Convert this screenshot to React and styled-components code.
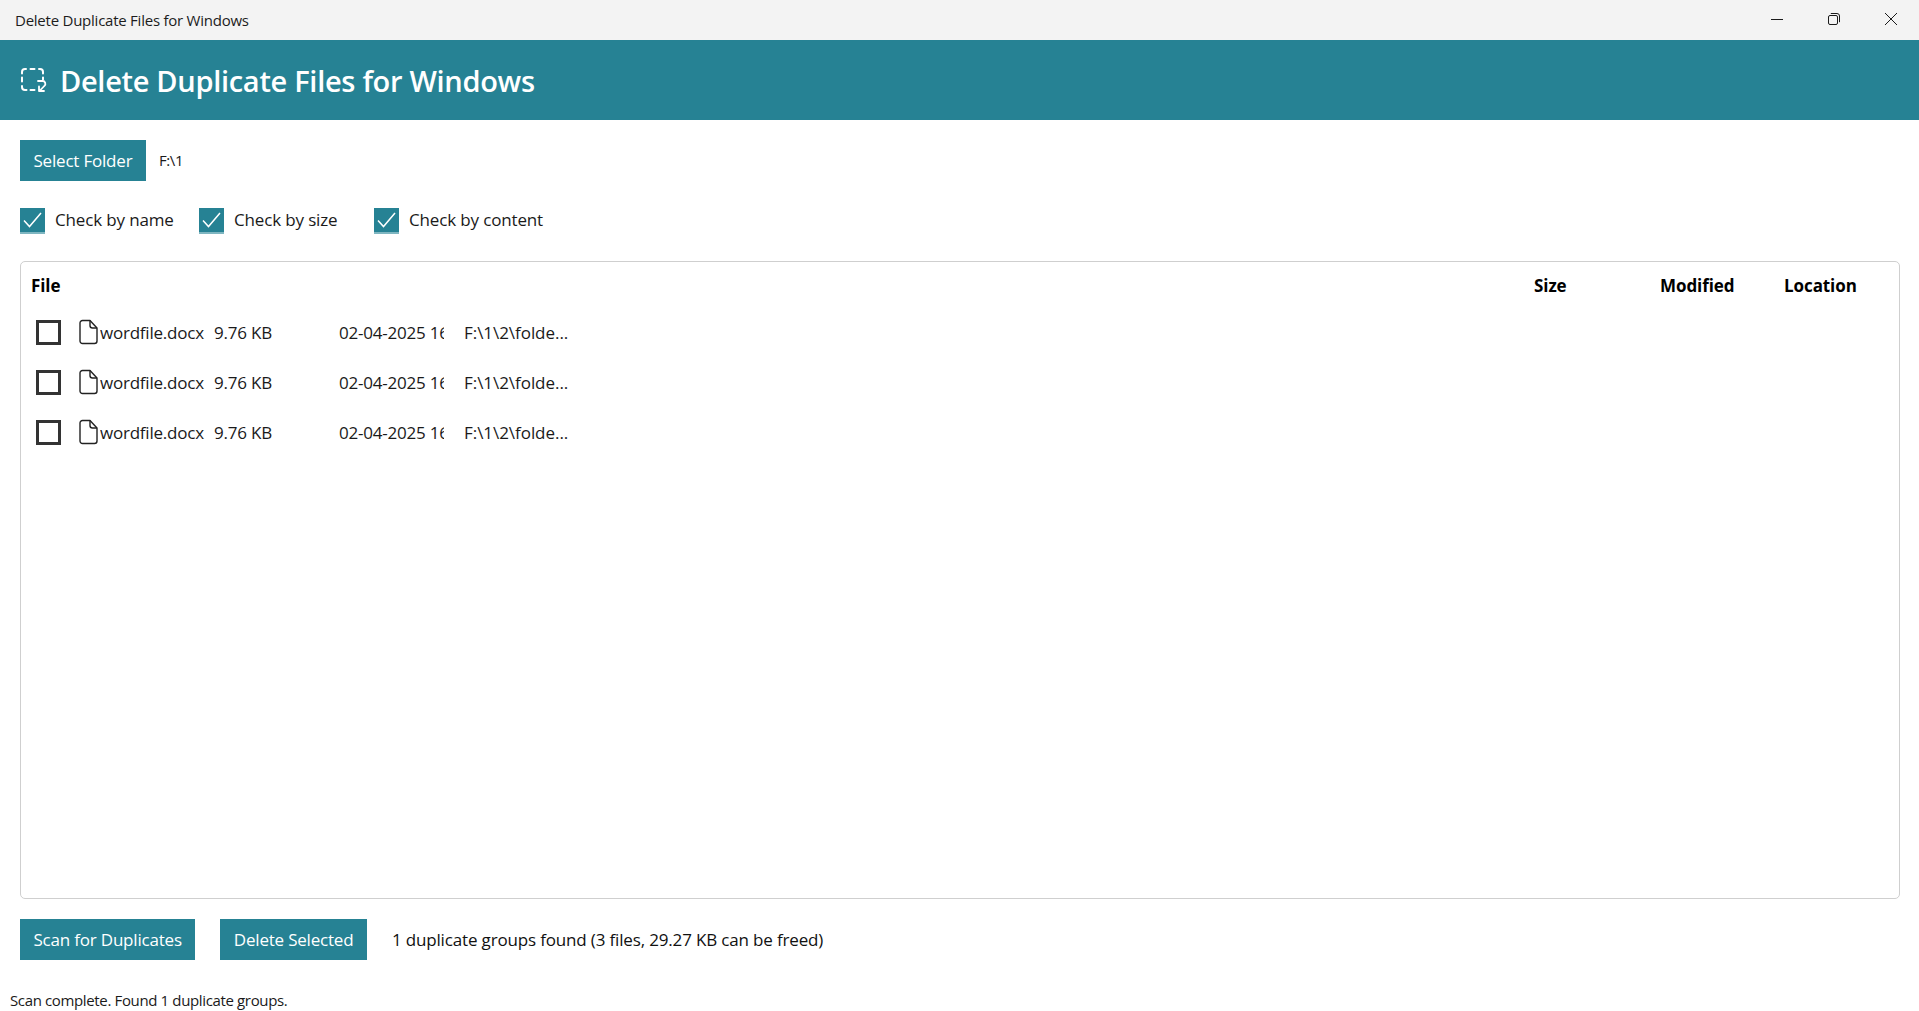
import React from "react";
import styled, { createGlobalStyle } from "styled-components";

const Global = createGlobalStyle`
  html, body { margin: 0; padding: 0; background: #fff; }
  body { font-family: "Open Sans", "Noto Sans", sans-serif; color: #1a1a1a; overflow: hidden; }
  * { box-sizing: border-box; }
`;
const TEAL = "#268294";

const Page = styled.div`
  width: 1919px; height: 1011px; display: flex; flex-direction: column; background: #fff;
`;
const TitleBar = styled.div`
  height: 40px; flex: none; background: #f3f3f3; display: flex; align-items: center;
  padding-left: 15px; font-size: 15px; letter-spacing: -0.24px; color: #1c1c1c;
`;
const TitleText = styled.span` flex: 1; `;
const WinButton = styled.div`
  width: 57px; height: 40px; display: flex; align-items: center; justify-content: center; padding-bottom: 2px;
`;
const Header = styled.header`
  height: 80px; flex: none; background: ${TEAL}; display: flex; align-items: center;
  padding-left: 20px; gap: 12px; color: #fff;
`;
const HeaderTitle = styled.h1`
  margin: 0; font-size: 29px; font-weight: 600; letter-spacing: -0.3px; color: #fff;
`;
const AppIconWrap = styled.span` display: flex; padding-top: 2px; `;
const Body = styled.main`
  flex: 1; min-height: 0; display: flex; flex-direction: column; padding: 20px 19px 0 20px;
`;
const FolderRow = styled.div` display: flex; align-items: center; height: 41px; gap: 13px; `;
const Button = styled.button`
  height: 41px; padding: 0 13.5px; border: 0; border-radius: 0; background: ${TEAL}; color: #fff;
  font: 400 17px "Open Sans", sans-serif; letter-spacing: -0.2px; white-space: nowrap;
`;
const PathText = styled.span` font-size: 15px; letter-spacing: -0.4px; padding-bottom: 1px; `;
const OptionsRow = styled.div` display: flex; height: 26px; margin-top: 27px; `;
const Option = styled.label`
  display: flex; align-items: center; width: ${p => p.$w}px; gap: 10px;
  font-size: 17px; letter-spacing: -0.15px; white-space: nowrap; line-height: 24px;
`;
const OptionText = styled.span` padding-bottom: 2px; `;
const CheckBox = styled.span`
  width: 25px; height: 26px; flex: none; background: ${TEAL}; border-bottom: 2px solid #7fb6c1;
  display: flex; align-items: center; justify-content: center;
`;
const Panel = styled.section`
  margin-top: 27px; height: 638px; flex: none; border: 1px solid #cfcfcf; border-radius: 5px;
  padding: 0 10px;
`;
const TableHead = styled.div`
  display: grid; grid-template-columns: 1503px 126px 124px 1fr; height: 45px; align-items: center;
  padding-top: 2px; font-size: 17px; font-weight: 700; letter-spacing: -0.08px; color: #000;
`;
const Row = styled.div`
  display: grid; grid-template-columns: 42px 22px 114px 125px 105px 1fr; height: 50px; align-items: center;
  padding-left: 5px; font-size: 17px; letter-spacing: -0.22px;
`;
const RowBox = styled.span`
  width: 25px; height: 25px; border: 3px solid #333; display: block; background: #fff;
`;
const Cell = styled.span` white-space: nowrap; overflow: hidden; `;
const Location = styled.span`
  display: block; padding-left: 20px; white-space: nowrap; letter-spacing: -0.05px;
`;
const ActionRow = styled.div` display: flex; align-items: center; gap: 25px; margin-top: 20px; height: 41px; `;
const Summary = styled.span` font-size: 17px; letter-spacing: -0.16px; color: #111; `;
const StatusBar = styled.footer`
  margin: 22px 0 0 -10px; font-size: 15px; letter-spacing: -0.36px; line-height: 36px; height: 36px;
`;

const Minimize = () => (
  <svg width="14" height="14" viewBox="0 0 14 14"><path d="M1 7.5h12" stroke="#1a1a1a" strokeWidth="1" /></svg>
);
const Restore = () => (
  <svg width="14" height="14" viewBox="0 0 14 14" fill="none" stroke="#1a1a1a">
    <rect x="1.5" y="3.5" width="9" height="9" rx="1.5" />
    <path d="M3.8 1.5h6.2a2.5 2.5 0 0 1 2.5 2.5v6.2" />
  </svg>
);
const Close = () => (
  <svg width="14" height="14" viewBox="0 0 14 14" stroke="#1a1a1a"><path d="M1 1l12 12M13 1L1 13" /></svg>
);
const AppIcon = () => (
  <svg width="28" height="28" viewBox="0 0 28 28" fill="none" stroke="#fff" strokeWidth="2" strokeLinecap="round">
    <path d="M2 6.500V5a3 3 0 0 1 3-3h1M10.500 2h4M19 2h1a3 3 0 0 1 3 3v1.500M23 10.500v2M2 10.500v4M2 19v1a3 3 0 0 0 3 3h1.500M10.500 23h4" />
    <path d="M19 15h4.500a2.800 2.800 0 0 1 1.800 5l-4.800 5M20 20.500v4.500h5" strokeWidth="1.800" strokeLinejoin="round" transform="translate(-1 -1)" />
  </svg>
);
const Tick = () => (
  <svg width="19" height="16" viewBox="0 0 19 16" fill="none" stroke="#fff" strokeWidth="1.5"><path d="M1 8.500l5.500 6L18 1" /></svg>
);
const FileIcon = () => (
  <svg width="20" height="26" viewBox="0 0 20 26" fill="none" stroke="#222" strokeWidth="1.4" strokeLinejoin="round" style={{ marginLeft: 1 }}>
    <path d="M3.500 1.500h7.500l7 7.500v13a2.500 2.500 0 0 1-2.500 2.500h-12A2.500 2.500 0 0 1 1 22V4a2.500 2.500 0 0 1 2.500-2.500z" />
    <path d="M11 1.500V6.500a2.500 2.500 0 0 0 2.500 2.500H18" />
  </svg>
);

const rows = [0, 1, 2];

export default function App() {
  return (
    <Page>
      <Global />
      <TitleBar>
        <TitleText>Delete Duplicate Files for Windows</TitleText>
        <WinButton><Minimize /></WinButton>
        <WinButton><Restore /></WinButton>
        <WinButton><Close /></WinButton>
      </TitleBar>
      <Header>
        <AppIconWrap><AppIcon /></AppIconWrap>
        <HeaderTitle>Delete Duplicate Files for Windows</HeaderTitle>
      </Header>
      <Body>
        <FolderRow>
          <Button>Select Folder</Button>
          <PathText>F:\1</PathText>
        </FolderRow>
        <OptionsRow>
          <Option $w={179}><CheckBox><Tick /></CheckBox><OptionText>Check by name</OptionText></Option>
          <Option $w={175}><CheckBox><Tick /></CheckBox><OptionText>Check by size</OptionText></Option>
          <Option $w={200}><CheckBox><Tick /></CheckBox><OptionText>Check by content</OptionText></Option>
        </OptionsRow>
        <Panel>
          <TableHead>
            <span>File</span><span>Size</span><span>Modified</span><span>Location</span>
          </TableHead>
          {rows.map(i => (
            <Row key={i}>
              <RowBox />
              <FileIcon />
              <Cell>wordfile.docx</Cell>
              <Cell>9.76 KB</Cell>
              <Cell>02-04-2025 16:32</Cell>
              <Location>F:\1\2\folde...</Location>
            </Row>
          ))}
        </Panel>
        <ActionRow>
          <Button>Scan for Duplicates</Button>
          <Button>Delete Selected</Button>
          <Summary>1 duplicate groups found (3 files, 29.27 KB can be freed)</Summary>
        </ActionRow>
        <StatusBar>Scan complete. Found 1 duplicate groups.</StatusBar>
      </Body>
    </Page>
  );
}
